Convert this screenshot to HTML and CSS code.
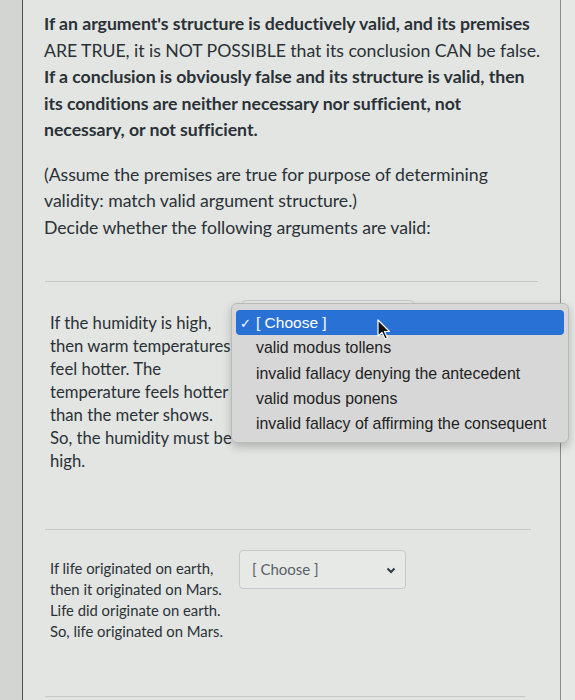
FILE: index.html
```html
<!DOCTYPE html>
<html>
<head>
<meta charset="utf-8">
<link rel="stylesheet" href="styles.css">
</head>
<body>
<div class="page">
  <div class="gutter"></div>
  <div class="panel">
    <p class="intro">
      <strong>If an argument's structure is deductively valid, and its premises</strong><br>
      ARE TRUE, it is NOT POSSIBLE that its conclusion CAN be false.<br>
      <strong>If a conclusion is obviously false and its structure is valid, then<br>
      its conditions are neither necessary nor sufficient, not<br>
      necessary, or not sufficient.</strong>
    </p>
    <p class="instr">
      (Assume the premises are true for purpose of determining<br>
      validity: match valid argument structure.)<br>
      Decide whether the following arguments are valid:
    </p>
    <div class="divider d1"></div>
    <div class="question q1">
      <div class="qtext">If the humidity is high,<br>then warm temperatures<br>feel hotter. The<br>temperature feels hotter<br>than the meter shows.<br>So, the humidity must be<br>high.</div>
      <div class="selwrap">
        <div class="select hidden-select"></div>
        <div class="popup">
          <div class="opt active"><span class="check">✓</span>[ Choose ]</div>
          <div class="opt">valid modus tollens</div>
          <div class="opt">invalid fallacy denying the antecedent</div>
          <div class="opt">valid modus ponens</div>
          <div class="opt">invalid fallacy of affirming the consequent</div>
        </div>
        <svg class="cursor" width="14" height="22" viewBox="0 0 14 22"><path d="M1 1 L1 17 L5 13.5 L8 20 L10.5 19 L7.5 12.5 L12.5 12.5 Z" fill="#111" stroke="#fff" stroke-width="1.2" stroke-linejoin="round"/></svg>
      </div>
    </div>
    <div class="divider d2"></div>
    <div class="question q2">
      <div class="qtext">If life originated on earth,<br>then it originated on Mars.<br>Life did originate on earth.<br>So, life originated on Mars.</div>
      <div class="selwrap">
        <div class="select">
          <span>[ Choose ]</span>
          <svg class="chev" width="10" height="7" viewBox="0 0 10 7"><path d="M1.5 1.5 L5 5 L8.5 1.5" fill="none" stroke="#2d3b45" stroke-width="2"/></svg>
        </div>
      </div>
    </div>
    <div class="divider d3"></div>
  </div>
  <div class="rightedge"></div>
</div>
</body>
</html>
```
FILE: styles.css
```css
html, body {
  margin: 0;
  padding: 0;
}
body {
  background: #dfe2df;
  width: 575px;
  height: 700px;
  overflow: hidden;
  font-family: Lato, "Open Sans", sans-serif;
  color: #2b3137;
}
.page {
  display: flex;
  height: 700px;
}
.gutter {
  width: 22px;
  flex: none;
  background: #d2d5d2;
  border-right: 1px solid #4e5350;
}
.panel {
  width: 516px;
  flex: none;
  padding-left: 21px;
  border-right: 1px solid #8a8e8b;
  background: #e2e5e2;
}
.rightedge {
  flex: 1;
  background: #e6e8e6;
}
.intro {
  margin: 11px 0 0 0;
  font-size: 17.7px;
  line-height: 26.5px;
  font-weight: 400;
  letter-spacing: -0.05px;
  white-space: nowrap;
}
.intro strong {
  font-weight: 700;
}
.instr {
  margin: 18px 0 0 0;
  font-size: 17.7px;
  line-height: 26.5px;
  letter-spacing: -0.05px;
  white-space: nowrap;
}
.divider {
  height: 1px;
  background: #c3c8c4;
  margin-left: 1px;
}
.d1 {
  width: 493px;
  margin-top: 40px;
}
.d2 {
  width: 486px;
  margin-top: 56px;
}
.d3 {
  width: 480px;
  margin-top: 54px;
}
.question {
  display: flex;
  padding-left: 6px;
}
.q1 {
  margin-top: 18px;
  font-size: 16.7px;
  line-height: 23px;
}
.q1 .qtext {
  width: 188px;
  padding-top: 12px;
  white-space: nowrap;
}
.q1 .selwrap {
  position: relative;
  margin-left: 4px;
}
.hidden-select {
  width: 172px;
  height: 38px;
}
.select {
  box-sizing: border-box;
  border: 1px solid #c4c9cc;
  border-radius: 4px;
  background: #e6e9e6;
  display: flex;
  align-items: center;
  justify-content: space-between;
  padding: 0 9px 0 12px;
}
.popup {
  position: absolute;
  left: -11px;
  top: 3px;
  width: 338px;
  height: 140px;
  box-sizing: border-box;
  padding: 6px 4px;
  background: #d6d7d6;
  border: 1px solid #b9bbb9;
  border-radius: 6px;
  box-shadow: 0 4px 10px rgba(0,0,0,0.22);
  font-family: "Liberation Sans", Arial, sans-serif;
  font-size: 15.9px;
  color: #222;
}
.opt {
  height: 25.3px;
  line-height: 25.3px;
  padding-left: 20px;
  white-space: nowrap;
}
.opt.active {
  background: #2a71d6;
  color: #fff;
  border-radius: 4px;
  padding-left: 4px;
  font-size: 15.5px;
}
.check {
  display: inline-block;
  width: 16px;
  font-size: 13px;
}
.cursor {
  position: absolute;
  left: 135px;
  top: 19px;
}
.q2 {
  margin-top: 20px;
  font-size: 14.8px;
  line-height: 21px;
}
.q2 .qtext {
  width: 189px;
  padding-top: 8px;
  white-space: nowrap;
}
.q2 .select {
  width: 167px;
  height: 39px;
  font-size: 15px;
  color: #5a6166;
}
.chev {
  margin-top: 2px;
}
```
